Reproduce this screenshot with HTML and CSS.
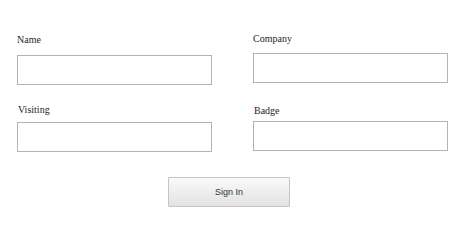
FILE: index.html
```html
<!DOCTYPE html>
<html>
<head>
<meta charset="utf-8">
<link rel="stylesheet" href="styles.css">
</head>
<body>
<form class="signin">
  <div class="cols">
    <div class="col col-left">
      <div class="field">
        <label class="lbl gap-9">Name</label>
        <input class="inp" type="text">
      </div>
      <div class="field field-next">
        <label class="lbl gap-6 indent">Visiting</label>
        <input class="inp" type="text">
      </div>
    </div>
    <div class="col col-right">
      <div class="field">
        <label class="lbl gap-8">Company</label>
        <input class="inp" type="text">
      </div>
      <div class="field field-next-r">
        <label class="lbl gap-4 indent">Badge</label>
        <input class="inp" type="text">
      </div>
    </div>
  </div>
  <div class="actions">
    <button class="btn" type="button">Sign In</button>
  </div>
</form>
</body>
</html>
```

FILE: styles.css
```css
html, body {
  margin: 0;
  padding: 0;
  background: #ffffff;
}
body {
  width: 474px;
  height: 240px;
  overflow: hidden;
  font-family: "Liberation Serif", "Times New Roman", serif;
  color: #1e1e1e;
}
.signin {
  margin: 0;
  padding: 0 0 0 17px;
}
.cols {
  display: flex;
  gap: 41px;
}
.col {
  display: flex;
  flex-direction: column;
  width: 195px;
}
.col-left { padding-top: 34px; }
.col-right { padding-top: 33px; }
.field {
  display: flex;
  flex-direction: column;
}
.field-next { margin-top: 19px; }
.field-next-r { margin-top: 22px; }
.lbl {
  display: block;
  font-size: 10px;
  line-height: 12px;
  height: 12px;
}
.indent { padding-left: 1px; }
.gap-9 { margin-bottom: 9px; }
.gap-8 { margin-bottom: 8px; }
.gap-6 { margin-bottom: 6px; }
.gap-4 { margin-bottom: 4px; }
.inp {
  box-sizing: border-box;
  width: 195px;
  height: 30px;
  margin: 0;
  padding: 0 4px;
  border: 1px solid #b3b3b3;
  background: #ffffff;
  outline: none;
}
.actions {
  padding: 25px 0 0 151px;
}
.btn {
  box-sizing: border-box;
  width: 122px;
  height: 30px;
  margin: 0;
  padding: 0;
  border: 1px solid #c4c4c4;
  border-radius: 1px;
  background: linear-gradient(#f9f9f9, #e3e3e3);
  font-family: "Liberation Sans", Arial, sans-serif;
  font-size: 9px;
  color: #333333;
}
```
